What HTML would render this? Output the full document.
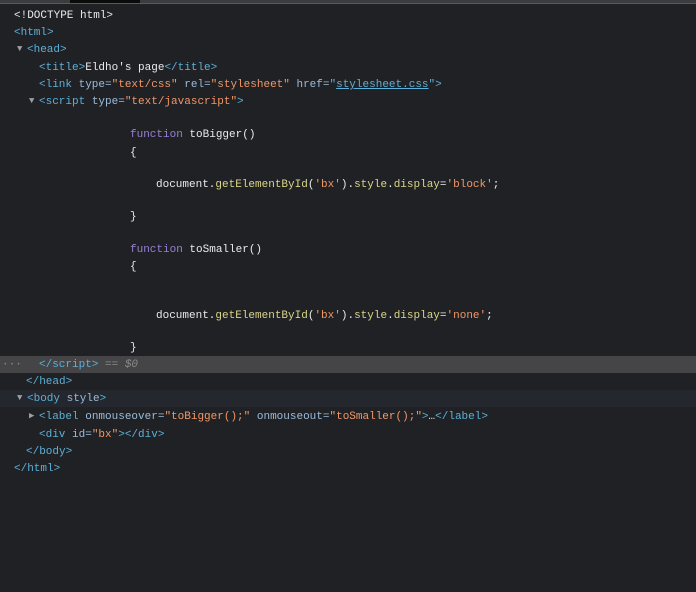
<!DOCTYPE html>
<html><head><style>
body{margin:0;width:696px;height:592px;background:#202124;overflow:hidden;position:relative;font-family:"Liberation Mono",monospace;font-size:11px;color:#e8eaed}
.l{position:absolute;white-space:pre;line-height:17px;height:17px}
.t{color:#5db0d7}.a{color:#9bbbdc}.v{color:#f29766}.k{color:#9a7fd5}.f{color:#d9d58a}.g{color:#8a8a8a}
.tri{color:#9aa0a6;font-size:9px;display:inline-block;width:10px;position:relative;top:-1px}
</style></head><body>
<div style="position:absolute;left:0;top:0;width:696px;height:3px;background:#3c3c3e"></div>
<div style="position:absolute;left:0;top:3px;width:696px;height:1px;background:#5a5a5c"></div>
<div style="position:absolute;left:70px;top:0;width:70px;height:3px;background:#0a0a0a"></div>
<div style="position:absolute;left:0;top:356px;width:696px;height:17px;background:#454547"></div>
<div style="position:absolute;left:0;top:390px;width:696px;height:17px;background:#24272d"></div>
<div class="l" style="left:14px;top:8px">&lt;!DOCTYPE html&gt;</div>
<div class="l t" style="left:14px;top:25px">&lt;html&gt;</div>
<div class="l" style="left:17px;top:42px"><span class="tri">▼</span><span class="t">&lt;head&gt;</span></div>
<div class="l" style="left:39px;top:60px"><span class="t">&lt;title&gt;</span>Eldho's page<span class="t">&lt;/title&gt;</span></div>
<div class="l" style="left:39px;top:77px"><span class="t">&lt;link </span><span class="a">type=</span><span class="v">"text/css"</span> <span class="a">rel=</span><span class="v">"stylesheet"</span> <span class="a">href=</span><span class="t">"<u>stylesheet.css</u>"&gt;</span></div>
<div class="l" style="left:29px;top:94px"><span class="tri">▼</span><span class="t">&lt;script </span><span class="a">type=</span><span class="v">"text/javascript"</span><span class="t">&gt;</span></div>
<div class="l" style="left:130px;top:127px"><span class="k">function</span> toBigger()</div>
<div class="l" style="left:130px;top:145px">{</div>
<div class="l" style="left:156px;top:177px">document.<span class="f">getElementById</span>(<span class="v">'bx'</span>).<span class="f">style</span>.<span class="f">display</span>=<span class="v">'block'</span>;</div>
<div class="l" style="left:130px;top:209px">}</div>
<div class="l" style="left:130px;top:242px"><span class="k">function</span> toSmaller()</div>
<div class="l" style="left:130px;top:259px">{</div>
<div class="l" style="left:156px;top:308px">document.<span class="f">getElementById</span>(<span class="v">'bx'</span>).<span class="f">style</span>.<span class="f">display</span>=<span class="v">'none'</span>;</div>
<div class="l" style="left:130px;top:340px">}</div>
<div class="l" style="left:2px;top:357px"><span class="g">···</span></div>
<div class="l" style="left:39px;top:357px"><span class="t">&lt;/script&gt;</span><span class="g"> == <i>$0</i></span></div>
<div class="l t" style="left:26px;top:374px">&lt;/head&gt;</div>
<div class="l" style="left:17px;top:391px"><span class="tri">▼</span><span class="t">&lt;body </span><span class="a">style</span><span class="t">&gt;</span></div>
<div class="l" style="left:29px;top:409px"><span class="tri">▶</span><span class="t">&lt;label </span><span class="a">onmouseover=</span><span class="v">"toBigger();"</span> <span class="a">onmouseout=</span><span class="v">"toSmaller();"</span><span class="t">&gt;</span>…<span class="t">&lt;/label&gt;</span></div>
<div class="l" style="left:39px;top:427px"><span class="t">&lt;div </span><span class="a">id=</span><span class="v">"bx"</span><span class="t">&gt;&lt;/div&gt;</span></div>
<div class="l t" style="left:26px;top:444px">&lt;/body&gt;</div>
<div class="l t" style="left:14px;top:461px">&lt;/html&gt;</div>
</body></html>
